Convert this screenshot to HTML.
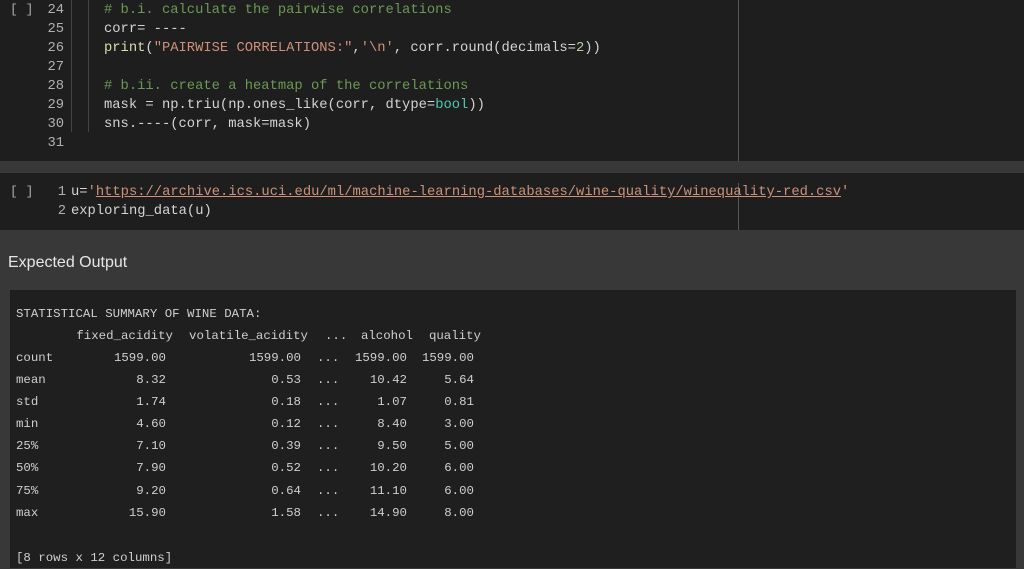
<!DOCTYPE html>
<html><head><meta charset="utf-8"><style>
body{margin:0;width:1024px;height:568px;overflow:hidden;background:#383838;font-family:"Liberation Mono",monospace;position:relative}
.cell{position:absolute;left:0;width:1024px;background:#1e1e1e}
.ln{position:absolute;width:30px;text-align:right;color:#b0b0b0;font-size:13.8px;line-height:19px}
.code{position:absolute;white-space:pre;color:#d4d4d4;font-size:13.8px;line-height:19px}
.br{position:absolute;color:#aaa;font-size:13px}
.c{color:#6a9955}.s{color:#ce9178}.f{color:#dcdcaa}.t{color:#4ec9b0}.n{color:#b5cea8}
.vl{position:absolute;width:1px;background:#444}
.out{position:absolute;left:10px;top:290px;width:1006px;height:278px;background:#1f1f1f;color:#cfcfcf;font-size:12.4px}
.r{position:absolute;left:0;height:22px;line-height:22px;width:600px;white-space:pre}
.r span{position:absolute}
</style></head><body>
<div class="cell" style="top:0;height:161px">
  <div class="br" style="left:10px;top:2px">[ ]</div>
  <div class="ln" style="left:34px;top:1px">24<br>25<br>26<br>27<br>28<br>29<br>30<br>31</div>
  <div class="vl" style="left:71px;top:0;height:132px"></div>
  <div class="vl" style="left:88px;top:0;height:132px"></div>
  <div class="vl" style="left:738px;top:0;height:161px;background:#555"></div>
  <div class="code" style="left:104px;top:1px"><span class="c"># b.i. calculate the pairwise correlations</span>
corr= ----
<span class="f">print</span>(<span class="s">"PAIRWISE CORRELATIONS:"</span>,<span class="s">'\n'</span>, corr.round(decimals=<span class="n">2</span>))

<span class="c"># b.ii. create a heatmap of the correlations</span>
mask = np.triu(np.ones_like(corr, dtype=<span class="t">bool</span>))
sns.----(corr, mask=mask)</div>
</div>
<div class="cell" style="top:173px;height:57px">
  <div class="br" style="left:10px;top:11px">[ ]</div>
  <div class="vl" style="left:738px;top:10px;height:47px;background:#555"></div>
  <div class="ln" style="left:36px;top:10px">1<br>2</div>
  <div class="code" style="left:71px;top:10px">u=<span class="s">'<u>https://archive.ics.uci.edu/ml/machine-learning-databases/wine-quality/winequality-red.csv</u>'</span>
exploring_data(u)</div>
</div>
<div style="position:absolute;left:8px;top:254px;font-family:'Liberation Sans',sans-serif;font-size:16px;color:#e6e6e6">Expected Output</div>
<div class="out">
  <div class="r" style="top:13px"><span style="left:6px">STATISTICAL SUMMARY OF WINE DATA:</span></div>
  <div class="r" style="top:35px"><span style="right:437px">fixed_acidity</span><span style="right:302px">volatile_acidity</span><span style="left:315px">...</span><span style="right:197px">alcohol</span><span style="right:129px">quality</span></div>
  <div class="r" style="top:57px"><span style="left:6px">count</span><span style="right:444px">1599.00</span><span style="right:309px">1599.00</span><span style="left:307px">...</span><span style="right:203px">1599.00</span><span style="right:136px">1599.00</span></div>
  <div class="r" style="top:79px"><span style="left:6px">mean</span><span style="right:444px">8.32</span><span style="right:309px">0.53</span><span style="left:307px">...</span><span style="right:203px">10.42</span><span style="right:136px">5.64</span></div>
  <div class="r" style="top:101px"><span style="left:6px">std</span><span style="right:444px">1.74</span><span style="right:309px">0.18</span><span style="left:307px">...</span><span style="right:203px">1.07</span><span style="right:136px">0.81</span></div>
  <div class="r" style="top:123px"><span style="left:6px">min</span><span style="right:444px">4.60</span><span style="right:309px">0.12</span><span style="left:307px">...</span><span style="right:203px">8.40</span><span style="right:136px">3.00</span></div>
  <div class="r" style="top:145px"><span style="left:6px">25%</span><span style="right:444px">7.10</span><span style="right:309px">0.39</span><span style="left:307px">...</span><span style="right:203px">9.50</span><span style="right:136px">5.00</span></div>
  <div class="r" style="top:167px"><span style="left:6px">50%</span><span style="right:444px">7.90</span><span style="right:309px">0.52</span><span style="left:307px">...</span><span style="right:203px">10.20</span><span style="right:136px">6.00</span></div>
  <div class="r" style="top:190px"><span style="left:6px">75%</span><span style="right:444px">9.20</span><span style="right:309px">0.64</span><span style="left:307px">...</span><span style="right:203px">11.10</span><span style="right:136px">6.00</span></div>
  <div class="r" style="top:212px"><span style="left:6px">max</span><span style="right:444px">15.90</span><span style="right:309px">1.58</span><span style="left:307px">...</span><span style="right:203px">14.90</span><span style="right:136px">8.00</span></div>
  <div class="r" style="top:257px"><span style="left:6px">[8 rows x 12 columns]</span></div>
</div>
</body></html>
